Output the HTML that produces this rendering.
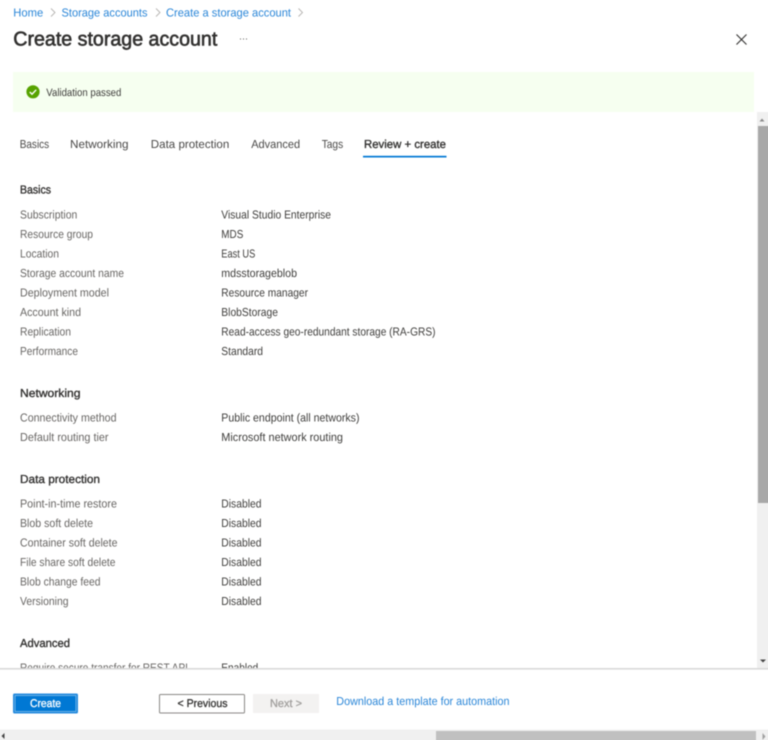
<!DOCTYPE html>
<html lang="en">
<head>
<meta charset="utf-8">
<title>Create storage account</title>
<style>
html{margin:0;padding:0;width:768px;height:740px;overflow:hidden;background:#fff}
body{margin:0;padding:0;width:768px;height:740px;overflow:hidden;background:#fff;position:relative;contain:paint}
svg{display:block;position:absolute;left:-4px;top:-4px;filter:blur(.4px)}
text{font-family:"Liberation Sans",sans-serif;font-size:11.6px;white-space:pre;text-rendering:geometricPrecision}
.l{fill:#686664}
.v{fill:#3f3e3c}
.h{fill:#323130;stroke:#323130;stroke-width:.34px;font-size:11.6px}
.a{fill:#2a86d8}
.t{fill:#4a4948}
</style>
</head>
<body>
<svg width="776" height="748" viewBox="-4 -4 776 748" xmlns="http://www.w3.org/2000/svg">
<rect x="-4" y="-4" width="776" height="748" fill="#fff"/>

<!-- breadcrumb -->
<text class="a" x="13.300" y="16.500" textLength="30" lengthAdjust="spacingAndGlyphs">Home</text>
<path d="M51 8.500l4 4-4 4" fill="none" stroke="#b5b3b1" stroke-width=".9"/>
<text class="a" x="61.500" y="16.500" textLength="86" lengthAdjust="spacingAndGlyphs">Storage accounts</text>
<path d="M156 8.500l4 4-4 4" fill="none" stroke="#b5b3b1" stroke-width=".9"/>
<text class="a" x="166" y="16.500" textLength="125" lengthAdjust="spacingAndGlyphs">Create a storage account</text>
<path d="M298.500 8.500l4 4-4 4" fill="none" stroke="#b5b3b1" stroke-width=".9"/>

<!-- title -->
<text x="13.300" y="45.700" textLength="204" lengthAdjust="spacingAndGlyphs" style="font-size:20px;fill:#323130;stroke:#323130;stroke-width:.6px">Create storage account</text>
<g fill="#605e5c"><rect x="240" y="38.500" width="1" height="1"/><rect x="243" y="38.500" width="1" height="1"/><rect x="246" y="38.500" width="1" height="1"/></g>
<path d="M736.500 34.500l10 10M746.500 34.500l-10 10" stroke="#323130" stroke-width="1.100" fill="none"/>

<!-- banner -->
<rect x="13" y="72" width="741" height="40" fill="#f6fff0"/>
<circle cx="33" cy="91.800" r="6.600" fill="#57a300"/>
<path d="M29.800 92l2.200 2.200 4.200-4.400" stroke="#fff" stroke-width="1.400" fill="none"/>
<text class="v" x="46.300" y="96" textLength="75" lengthAdjust="spacingAndGlyphs" style="font-size:10.800px">Validation passed</text>

<g transform="translate(0,-.3)">
<!-- tabs -->
<text class="t" x="19.700" y="148.300" textLength="29.500" lengthAdjust="spacingAndGlyphs">Basics</text>
<text class="t" x="70" y="148.300" textLength="58.500" lengthAdjust="spacingAndGlyphs">Networking</text>
<text class="t" x="150.800" y="148.300" textLength="78.500" lengthAdjust="spacingAndGlyphs">Data protection</text>
<text class="t" x="251.200" y="148.300" textLength="49" lengthAdjust="spacingAndGlyphs">Advanced</text>
<text class="t" x="321.700" y="148.300" textLength="21.500" lengthAdjust="spacingAndGlyphs">Tags</text>
<text class="h" x="364" y="148.300" textLength="82" lengthAdjust="spacingAndGlyphs">Review + create</text>

<!-- Basics -->
<text class="h" x="20" y="193.700" textLength="31" lengthAdjust="spacingAndGlyphs">Basics</text>
<text class="l" x="20" y="218.800" textLength="57.300" lengthAdjust="spacingAndGlyphs">Subscription</text>
<text class="v" x="221.300" y="218.800" textLength="109.700" lengthAdjust="spacingAndGlyphs">Visual Studio Enterprise</text>
<text class="l" x="20" y="238.300" textLength="73" lengthAdjust="spacingAndGlyphs">Resource group</text>
<text class="v" x="221.300" y="238.300" textLength="22" lengthAdjust="spacingAndGlyphs">MDS</text>
<text class="l" x="20" y="257.800" textLength="39" lengthAdjust="spacingAndGlyphs">Location</text>
<text class="v" x="221.300" y="257.800" textLength="34" lengthAdjust="spacingAndGlyphs">East US</text>
<text class="l" x="20" y="277.300" textLength="104" lengthAdjust="spacingAndGlyphs">Storage account name</text>
<text class="v" x="221.300" y="277.300" textLength="75.700" lengthAdjust="spacingAndGlyphs">mdsstorageblob</text>
<text class="l" x="20" y="296.800" textLength="89" lengthAdjust="spacingAndGlyphs">Deployment model</text>
<text class="v" x="221.300" y="296.800" textLength="86.700" lengthAdjust="spacingAndGlyphs">Resource manager</text>
<text class="l" x="20" y="316.300" textLength="61" lengthAdjust="spacingAndGlyphs">Account kind</text>
<text class="v" x="221.300" y="316.300" textLength="56.700" lengthAdjust="spacingAndGlyphs">BlobStorage</text>
<text class="l" x="20" y="335.800" textLength="51" lengthAdjust="spacingAndGlyphs">Replication</text>
<text class="v" x="221.300" y="335.800" textLength="214.200" lengthAdjust="spacingAndGlyphs">Read-access geo-redundant storage (RA-GRS)</text>
<text class="l" x="20" y="355.300" textLength="58" lengthAdjust="spacingAndGlyphs">Performance</text>
<text class="v" x="221.300" y="355.300" textLength="41.700" lengthAdjust="spacingAndGlyphs">Standard</text>

<!-- Networking -->
<text class="h" x="20" y="397.500" textLength="60.500" lengthAdjust="spacingAndGlyphs">Networking</text>
<text class="l" x="20" y="421.800" textLength="96.500" lengthAdjust="spacingAndGlyphs">Connectivity method</text>
<text class="v" x="221.300" y="421.800" textLength="138.200" lengthAdjust="spacingAndGlyphs">Public endpoint (all networks)</text>
<text class="l" x="20" y="441.300" textLength="88.500" lengthAdjust="spacingAndGlyphs">Default routing tier</text>
<text class="v" x="221.300" y="441.300" textLength="121.700" lengthAdjust="spacingAndGlyphs">Microsoft network routing</text>

<!-- Data protection -->
<text class="h" x="20" y="483.300" textLength="80" lengthAdjust="spacingAndGlyphs">Data protection</text>
<text class="l" x="20" y="507.800" textLength="97" lengthAdjust="spacingAndGlyphs">Point-in-time restore</text>
<text class="v" x="221.300" y="507.800" textLength="40.200" lengthAdjust="spacingAndGlyphs">Disabled</text>
<text class="l" x="20" y="527.300" textLength="73" lengthAdjust="spacingAndGlyphs">Blob soft delete</text>
<text class="v" x="221.300" y="527.300" textLength="40.200" lengthAdjust="spacingAndGlyphs">Disabled</text>
<text class="l" x="20" y="546.800" textLength="97.500" lengthAdjust="spacingAndGlyphs">Container soft delete</text>
<text class="v" x="221.300" y="546.800" textLength="40.200" lengthAdjust="spacingAndGlyphs">Disabled</text>
<text class="l" x="20" y="566.300" textLength="95.500" lengthAdjust="spacingAndGlyphs">File share soft delete</text>
<text class="v" x="221.300" y="566.300" textLength="40.200" lengthAdjust="spacingAndGlyphs">Disabled</text>
<text class="l" x="20" y="585.800" textLength="80.500" lengthAdjust="spacingAndGlyphs">Blob change feed</text>
<text class="v" x="221.300" y="585.800" textLength="40.200" lengthAdjust="spacingAndGlyphs">Disabled</text>
<text class="l" x="20" y="605.300" textLength="48.500" lengthAdjust="spacingAndGlyphs">Versioning</text>
<text class="v" x="221.300" y="605.300" textLength="40.200" lengthAdjust="spacingAndGlyphs">Disabled</text>

<!-- Advanced -->
<text class="h" x="20" y="647.300" textLength="50" lengthAdjust="spacingAndGlyphs">Advanced</text>
<text class="l" x="20" y="671.800" textLength="168" lengthAdjust="spacingAndGlyphs">Require secure transfer for REST API</text>
<text class="v" x="221.300" y="671.800" textLength="37" lengthAdjust="spacingAndGlyphs">Enabled</text>
</g>
<rect x="363" y="155.800" width="83.500" height="1.700" fill="#0078d4"/>

<!-- vertical scrollbar -->
<rect x="757" y="112" width="15" height="556" fill="#f0f0f0"/>
<rect x="758" y="126" width="14" height="377" fill="#a8a8a8"/>
<path d="M759.500 121.500h5l-2.500-3z" fill="#8a8a8a"/>
<path d="M760 659.500h6l-3 3z" fill="#444"/>

<!-- footer -->
<rect x="-4" y="668" width="776" height="76" fill="#fff"/>
<rect x="-4" y="668" width="776" height="1.600" fill="#d9d9d9"/>

<rect x="13.500" y="694" width="64" height="19" rx="1" fill="#0078d4" stroke="#2f8fe0"/>
<rect x="15" y="695.500" width="61" height="16" fill="none" stroke="#8cc4ee" stroke-width=".8"/>
<text x="30" y="707" textLength="31" lengthAdjust="spacingAndGlyphs" style="fill:#fff;stroke:#fff;stroke-width:.3px;font-size:11.200px">Create</text>

<rect x="159.500" y="694.500" width="85" height="18.500" rx="1" fill="#fff" stroke="#8a8886"/>
<text x="177.500" y="707" textLength="50" lengthAdjust="spacingAndGlyphs" style="fill:#323130;stroke:#323130;stroke-width:.3px;font-size:11.200px">&lt; Previous</text>

<rect x="253" y="694" width="66" height="19" fill="#f3f2f1"/>
<text x="270" y="707" textLength="32" lengthAdjust="spacingAndGlyphs" style="fill:#a19f9d;stroke:#a19f9d;stroke-width:.3px;font-size:11.200px">Next &gt;</text>

<text class="a" x="336.300" y="705" textLength="173.200" lengthAdjust="spacingAndGlyphs">Download a template for automation</text>

<!-- horizontal scrollbar -->
<rect x="-4" y="729.500" width="776" height="14.500" fill="#f0f0f0"/>
<rect x="436" y="731" width="320" height="13" fill="#c0c0c0"/>
<path d="M4.500 733l-3 3 3 3z" fill="#444"/>
<path d="M762.500 733l3 3.500-3 3.500z" fill="#a0a0a0"/>
</svg>
</body>
</html>
